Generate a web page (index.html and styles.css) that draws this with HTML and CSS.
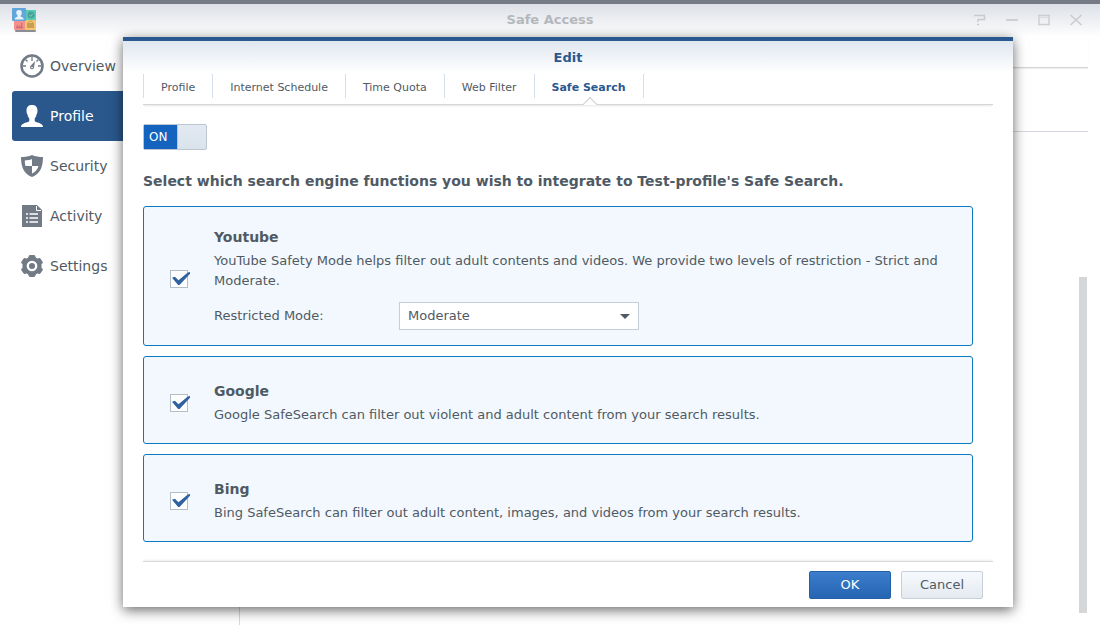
FILE: index.html
```
<!DOCTYPE html>
<html lang="en">
<head>
  <meta charset="UTF-8">
  <meta name="viewport" content="width=device-width, initial-scale=1.0">
  <title>Safe Access</title>
  <link rel="stylesheet" href="styles.css">
</head>
<body>

  <div class="window">
    <header class="titlebar">
      <svg class="app-icon" width="26" height="26" viewBox="0 0 26 26">
        <rect x="3" y="22" width="21" height="2" rx="1" fill="#777b82"/>
        <rect x="13" y="2" width="11" height="11" fill="#3fc6b0"/>
        <rect x="2" y="12" width="12" height="10" rx="1" fill="#f67f79"/>
        <rect x="13" y="12" width="11" height="10" rx="1" fill="#f5bd58"/>
        <rect x="0" y="0" width="14" height="13" rx="1" fill="#4b9bd8"/>
        <path d="M7 2c-2 0-3 1.200-2.700 3 .1 1.200.7 1.800 1.300 2.500v1L3 10v1.500h8.500V10L8.700 8.500v-1C9.500 6.800 9.800 6.200 9.800 5 10 3.200 9 2 7 2z" fill="#e8f4fd"/>
        <circle cx="19" cy="7" r="3.500" fill="#2f9488"/>
        <path d="M17.300 7l1.300 1.300 2.200-2.600" fill="none" stroke="#5fd0be"/>
        <path d="M4 19.500h7M5.500 19v-2M7.500 19v-1M9.500 19v-4" fill="none" stroke="#c25a5a" stroke-width="1.300"/>
        <rect x="15" y="15" width="7" height="5" fill="#c48d38"/>
        <path d="M16.500 15.500v-.500a2 2 0 0 1 4 0v.500" fill="none" stroke="#c48d38"/>
      </svg>
      <h1 class="app-title">Safe Access</h1>
      <div class="window-controls">
        <button class="control" type="button" aria-label="Help">
          <svg width="12" height="12" viewBox="0 0 12 12"><path d="M0 1.500h11M10.500 2v4M4 5.500h7M4 5v3M3 10.500h2" fill="none" stroke="#c8cbce" stroke-width="1.500"/></svg>
        </button>
        <button class="control" type="button" aria-label="Minimize">
          <svg width="12" height="12" viewBox="0 0 12 12"><path d="M0 6h12" stroke="#cdd0d3" stroke-width="2"/></svg>
        </button>
        <button class="control" type="button" aria-label="Maximize">
          <svg width="12" height="12" viewBox="0 0 12 12"><path d="M0 1.500h12M1 1v10M11 1v10M0 10.500h12" fill="none" stroke="#cdd0d3" stroke-width="1.500"/><path d="M2 3.500h8" stroke="#dadde0"/></svg>
        </button>
        <button class="control" type="button" aria-label="Close">
          <svg width="12" height="12" viewBox="0 0 12 12"><path d="M.5 1l11 10M11.500 1L.5 11" stroke="#c8cbce" stroke-width="1.500"/></svg>
        </button>
      </div>
    </header>

    <div class="window-body">
      <nav class="sidebar">
        <a class="nav-item" href="#overview">
          <svg width="24" height="24" viewBox="0 0 24 24">
            <circle cx="12" cy="12" r="10.500" fill="#fff" stroke="#717a85" stroke-width="2.500"/>
            <path d="M12 3v4M5.500 5.500l2 2M18.500 5.500l-2 2M3 12h3M18 12h3" stroke="#717a85" stroke-width="1.300"/>
            <path d="M15 7l-1 6.500a2 2 0 1 1-3.300-1.800z" fill="#717a85"/>
            <circle cx="12" cy="13.500" r=".8" fill="#fff"/>
          </svg>
          Overview
        </a>
        <a class="nav-item active" href="#profile">
          <svg width="24" height="24" viewBox="0 0 24 24">
            <path d="M12 1C8.500 1 6.500 3 6.500 6.500c0 2 .3 3 1 4 .4 2.300 1 3 1.800 4v2.500C8 19 1 18.500 1 23h22c0-4.500-7-4-8.300-6v-2.500c.8-1 1.400-1.700 1.800-4 .7-1 1-2 1-4C17.500 3 15.500 1 12 1z" fill="#fff"/>
          </svg>
          Profile
        </a>
        <a class="nav-item" href="#security">
          <svg width="24" height="24" viewBox="0 0 24 24">
            <path d="M1 3c4 0 8-.5 11-2 3 1.500 7 2 11 2 0 10-3 17-11 20C4 20 1 13 1 3z" fill="#717a85"/>
            <path d="M12 5v7H5.500C5 10 4.800 8 4.800 6.500 7.500 6.300 10 6 12 5zM12 12h6.500c-1 3.500-3.200 6-6.500 7.500z" fill="#fff"/>
          </svg>
          Security
        </a>
        <a class="nav-item" href="#activity">
          <svg width="24" height="24" viewBox="0 0 24 24">
            <path d="M2 1h15l5 5v17H2z" fill="#717a85"/>
            <path d="M16.500 2v4.500H21" fill="none" stroke="#fff"/>
            <path d="M6 10h2M6 14h2M6 18h2M9.500 10H18M9.500 14H18M9.500 18H18" stroke="#fff" stroke-width="1.600"/>
          </svg>
          Activity
        </a>
        <a class="nav-item" href="#settings">
          <svg width="24" height="24" viewBox="0 0 24 24">
            <path d="M9.500 1.500h5l1 2.500 2 1 2.500-.5 2.500 4-1.500 2v3l1.500 2-2.500 4-2.500-.5-2 1-1 2.500h-5l-1-2.500-2-1-2.500.5-2.500-4 1.500-2v-3l-1.500-2 2.500-4 2.500.5 2-1z" fill="#717a85" stroke="#717a85" stroke-linejoin="round"/>
            <circle cx="12" cy="12" r="4.200" fill="#717a85" stroke="#fff" stroke-width="2.300"/>
          </svg>
          Settings
        </a>
      </nav>
      <main class="content">
        <div class="content-head"></div>
        <div class="content-row"></div>
      </main>
      <div class="scrollbar"></div>
    </div>
  </div>

  <form class="dialog" role="dialog" aria-labelledby="dialogTitle">
    <h2 class="dialog-title" id="dialogTitle">Edit</h2>

    <div class="tabs" role="tablist">
      <button class="tab" type="button" role="tab">Profile</button>
      <button class="tab" type="button" role="tab">Internet Schedule</button>
      <button class="tab" type="button" role="tab">Time Quota</button>
      <button class="tab" type="button" role="tab">Web Filter</button>
      <button class="tab active" type="button" role="tab" aria-selected="true">Safe Search</button>
    </div>

    <div class="dialog-body">
      <label class="switch">
        <input class="switch-input" type="checkbox" aria-label="Safe Search" checked>
        <span class="switch-on">ON</span>
      </label>

      <p class="intro">Select which search engine functions you wish to integrate to Test-profile's Safe Search.</p>

      <div class="engines">
        <section class="engine">
          <input class="check" type="checkbox" id="youtube" checked>
          <div class="engine-info">
            <label class="engine-name" for="youtube">Youtube</label>
            <p class="engine-text">YouTube Safety Mode helps filter out adult contents and videos. We provide two levels of restriction - Strict and Moderate.</p>
            <div class="field">
              <label class="field-label" for="mode">Restricted Mode:</label>
              <div class="select-wrap">
                <select class="select" id="mode">
                  <option>Strict</option>
                  <option selected>Moderate</option>
                </select>
              </div>
            </div>
          </div>
        </section>

        <section class="engine">
          <input class="check" type="checkbox" id="google" checked>
          <div class="engine-info">
            <label class="engine-name" for="google">Google</label>
            <p class="engine-text">Google SafeSearch can filter out violent and adult content from your search results.</p>
          </div>
        </section>

        <section class="engine">
          <input class="check" type="checkbox" id="bing" checked>
          <div class="engine-info">
            <label class="engine-name" for="bing">Bing</label>
            <p class="engine-text">Bing SafeSearch can filter out adult content, images, and videos from your search results.</p>
          </div>
        </section>
      </div>
    </div>

    <footer class="dialog-footer">
      <button class="btn btn-primary" type="submit">OK</button>
      <button class="btn" type="button">Cancel</button>
    </footer>
  </form>

</body>
</html>
```
FILE: styles.css
```
* {
  box-sizing: border-box;
}

body {
  margin: 0;
  font-family: Verdana, "DejaVu Sans", sans-serif;
  font-size: 13px;
  line-height: 20px;
  color: #505a64;
  background: #fff;
}

button,
select {
  font: inherit;
  color: inherit;
}

h1,
h2,
p {
  margin: 0;
}

/* Window behind the dialog */
.window {
  display: flex;
  flex-direction: column;
  height: 100vh;
  overflow: hidden;
  border-top: 4px solid #767a85;
}

.titlebar {
  display: flex;
  align-items: center;
  height: 33px;
  padding: 0 12px 2px;
  background: linear-gradient(#dce0e6, #fff);
}

.app-icon {
  margin-top: 2px;
  opacity: 0.85;
}

.app-title {
  flex: 1;
  padding-left: 94px;
  text-align: center;
  font-size: 13px;
  color: #b4b8bd;
}

.window-controls {
  display: flex;
  gap: 8px;
}

.control {
  display: flex;
  align-items: center;
  justify-content: center;
  width: 24px;
  height: 24px;
  padding: 0;
  border: 0;
  background: none;
}

.window-body {
  display: flex;
  flex: 1;
}

.sidebar {
  width: 240px;
  padding: 4px 0 0 12px;
  border-right: 1px solid #d8d8d8;
}

.nav-item {
  display: flex;
  align-items: center;
  gap: 6px;
  height: 50px;
  padding-left: 8px;
  border-radius: 3px;
  font-size: 14px;
  color: #505a64;
  text-decoration: none;
}

.nav-item.active {
  color: #fff;
  background: #2a588c;
}

.content {
  flex: 1;
}

.content-head {
  height: 31px;
  border-bottom: 1px solid #d2d4d6;
  box-shadow: 0 1px 1px #f0f0f0;
}

.content-row {
  height: 64px;
  border-bottom: 1px solid #d4d8e0;
}

.scrollbar {
  width: 8px;
  height: 336px;
  margin: 240px 13px 0 -9px;
  background: #d5d6d8;
}

/* Dialog */
.dialog {
  position: absolute;
  top: 37px;
  left: 123px;
  right: 87px;
  padding: 0 20px;
  border-top: 4px solid #2b588f;
  background: linear-gradient(#e0e7f0, #fff 32px);
  box-shadow: 0 3px 12px rgba(0, 0, 0, 0.6);
}

.dialog-title {
  padding: 7px 0 6px;
  text-align: center;
  font-size: 13px;
  color: #2b588f;
}

.tabs {
  display: flex;
  padding-bottom: 6px;
  border-bottom: 1px solid #d6d6d6;
  box-shadow: 0 2px 2px -1px #e6e6e6;
}

.tab {
  position: relative;
  height: 24px;
  padding: 3px 17px 0;
  border: 0;
  border-right: 1px solid #d5deea;
  background: none;
  font-size: 11px;
}

.tab:first-child {
  border-left: 1px solid #d5deea;
}

.tab.active {
  font-weight: bold;
  color: #2b588f;
}

/* Pointer on the line under the open tab */
.tab.active::after {
  content: "";
  position: absolute;
  bottom: -11px;
  left: 50%;
  width: 9px;
  height: 9px;
  margin-left: -4px;
  border: 1px solid #cfcfcf;
  border-right: 0;
  border-bottom: 0;
  background: linear-gradient(135deg, #fff 50%, transparent 50%);
  transform: rotate(45deg);
}

.dialog-body {
  padding: 19px 20px 19px 0;
}

.switch {
  position: relative;
  display: flex;
  width: 64px;
  height: 26px;
  border: 1px solid #bcc6d0;
  border-radius: 2px;
  background: linear-gradient(#e2e9f2, #dae3ec);
}

.switch-input {
  position: absolute;
  inset: 0;
  margin: 0;
  opacity: 0;
}

.switch-on {
  width: 34px;
  padding-left: 5px;
  border-right: 1px solid #bcc6d0;
  line-height: 24px;
  font-size: 12px;
  color: #fff;
  background: #1463bf;
}

.intro {
  padding: 21px 0 15px;
  font-size: 14px;
  font-weight: bold;
}

.engines {
  display: flex;
  flex-direction: column;
  gap: 10px;
}

.engine {
  display: flex;
  align-items: center;
  gap: 26px;
  min-height: 88px;
  padding: 20px 26px 15px;
  border: 1px solid #0a7bc0;
  border-radius: 3px;
  background: #f2f8fd;
}

.check {
  appearance: none;
  position: relative;
  flex: none;
  width: 18px;
  height: 18px;
  margin: 0;
  border: 1px solid #b4bec8;
  background: #fff;
}

.check:checked::after {
  content: "";
  position: absolute;
  top: 1px;
  left: 1px;
  width: 18px;
  height: 14px;
  background: #2f62a0;
  clip-path: polygon(0 45%, 16% 38%, 36% 62%, 88% 8%, 100% 4%, 100% 16%, 42% 96%, 34% 96%);
}

.engine-name {
  display: block;
  margin-bottom: 4px;
  font-size: 14px;
  font-weight: bold;
}

.field {
  display: flex;
  align-items: center;
  margin-top: 11px;
}

.field-label {
  width: 185px;
}

.select-wrap {
  position: relative;
  width: 240px;
}

.select-wrap::after {
  content: "";
  position: absolute;
  top: 12px;
  right: 9px;
  border: 5px solid transparent;
  border-top-color: #505a64;
  border-bottom: 0;
  pointer-events: none;
}

.select {
  appearance: none;
  display: block;
  width: 100%;
  height: 28px;
  padding: 0 8px;
  border: 1px solid #c4ced9;
  border-radius: 0;
  background: #fff;
}

.dialog-footer {
  display: flex;
  justify-content: flex-end;
  gap: 10px;
  padding: 9px 10px 8px;
  border-top: 1px solid #d9d9d9;
  box-shadow: 0 -2px 2px -1px #ececec;
}

.btn {
  width: 82px;
  height: 28px;
  padding: 0;
  border: 1px solid #c6d0dc;
  border-radius: 2px;
  background: linear-gradient(#f6fafe, #e5eaf0);
}

.btn-primary {
  border-color: #2460a8;
  color: #fff;
  background: linear-gradient(#3c7dcc, #2565b2);
}
```
